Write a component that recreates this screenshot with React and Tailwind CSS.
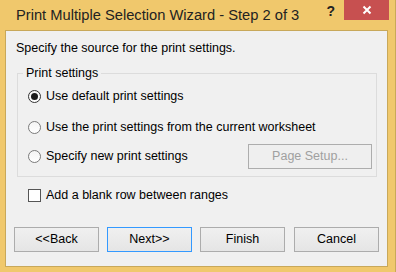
import { Fragment } from 'react';

const FONT = { fontFamily: '"Segoe UI", "Liberation Sans", Arial, sans-serif' };

const Radio = ({ checked, label }) => (
  <label className="flex items-center gap-[5px]">
    <span
      className={`flex h-[13px] w-[13px] items-center justify-center rounded-full border bg-gradient-to-b from-[#f4f4f4] to-white ${
        checked ? 'border-[#333333]' : 'border-[#7a7a7a]'
      }`}
    >
      {checked && <span className="h-[7px] w-[7px] rounded-full bg-[#1a1a1a]" />}
    </span>
    <span>{label}</span>
  </label>
);

const Button = ({ children, primary, className = '' }) => (
  <button
    type="button"
    className={[
      'h-[25px] w-[85px] border bg-gradient-to-b from-[#f0f0f0] to-[#e5e5e5] text-[12.5px] leading-none text-black',
      primary ? 'border-[#3399ff]' : 'border-[#acacac]',
      className,
    ].join(' ')}
  >
    {children}
  </button>
);

export default function App() {
  return (
    <div
      className="h-[272px] w-[396px] overflow-hidden border-r border-[#c9a957] bg-[#f0c86c] text-[12.5px] text-black"
      style={FONT}
    >
      {/* Title bar */}
      <div className="flex h-[30px] items-start">
        <div className="flex h-[30px] flex-1 items-center pl-4 text-[14.7px] text-[#222]">
          Print Multiple Selection Wizard - Step 2 of 3
        </div>
        <div className="mt-[3px] mr-[9px] text-[14px] font-bold leading-[16px] text-[#222]">?</div>
        <div className="flex h-[20px] w-[45px] items-center justify-center bg-[#c75050]">
          <svg width="10" height="10" viewBox="0 0 10 10">
            <path d="M1.5 1.5 L8.5 8.5 M8.5 1.5 L1.5 8.5" stroke="white" strokeWidth="2" />
          </svg>
        </div>
        <div className="w-[6px]" />
      </div>

      {/* Client area */}
      <div className="ml-[5px] flex h-[237px] w-[383px] flex-col border border-[#c8a85a] bg-[#f0f0f0] pl-[10px] pt-[9px]">
        <div className="h-[16px] leading-[16px]">Specify the source for the print settings.</div>

        <div className="relative mt-[17px] ml-px w-[360px] border border-[#dcdcdc] pl-[10px] pt-[10px] pb-[8px]">
          <span className="absolute -top-[9px] left-[5px] bg-[#f0f0f0] px-[3px] leading-[16px]">
            Print settings
          </span>
          <div className="flex h-[24px] items-center">
            <Radio checked label="Use default print settings" />
          </div>
          <div className="mt-[7px] flex h-[24px] items-center">
            <Radio label="Use the print settings from the current worksheet" />
          </div>
          <div className="mt-[5px] flex h-[24px] items-center justify-between pr-[4px]">
            <Radio label="Specify new print settings" />
            <button
              type="button"
              className="h-[25px] w-[124px] border border-[#adadad] bg-[#efefef] text-[12.5px] text-[#a0a0a0]"
            >
              Page Setup...
            </button>
          </div>
        </div>

        <label className="mt-[10px] ml-[12px] flex h-[16px] items-center gap-[5px]">
          <span className="h-[13px] w-[13px] border border-[#555] bg-white" />
          <span>Add a blank row between ranges</span>
        </label>

        <div className="mt-[24px] flex gap-[8px]">
          <Fragment>
            <Button className="-ml-[2px]">&lt;&lt;Back</Button>
            <Button primary>Next&gt;&gt;</Button>
            <Button>Finish</Button>
            <Button className="ml-px">Cancel</Button>
          </Fragment>
        </div>
      </div>
    </div>
  );
}
